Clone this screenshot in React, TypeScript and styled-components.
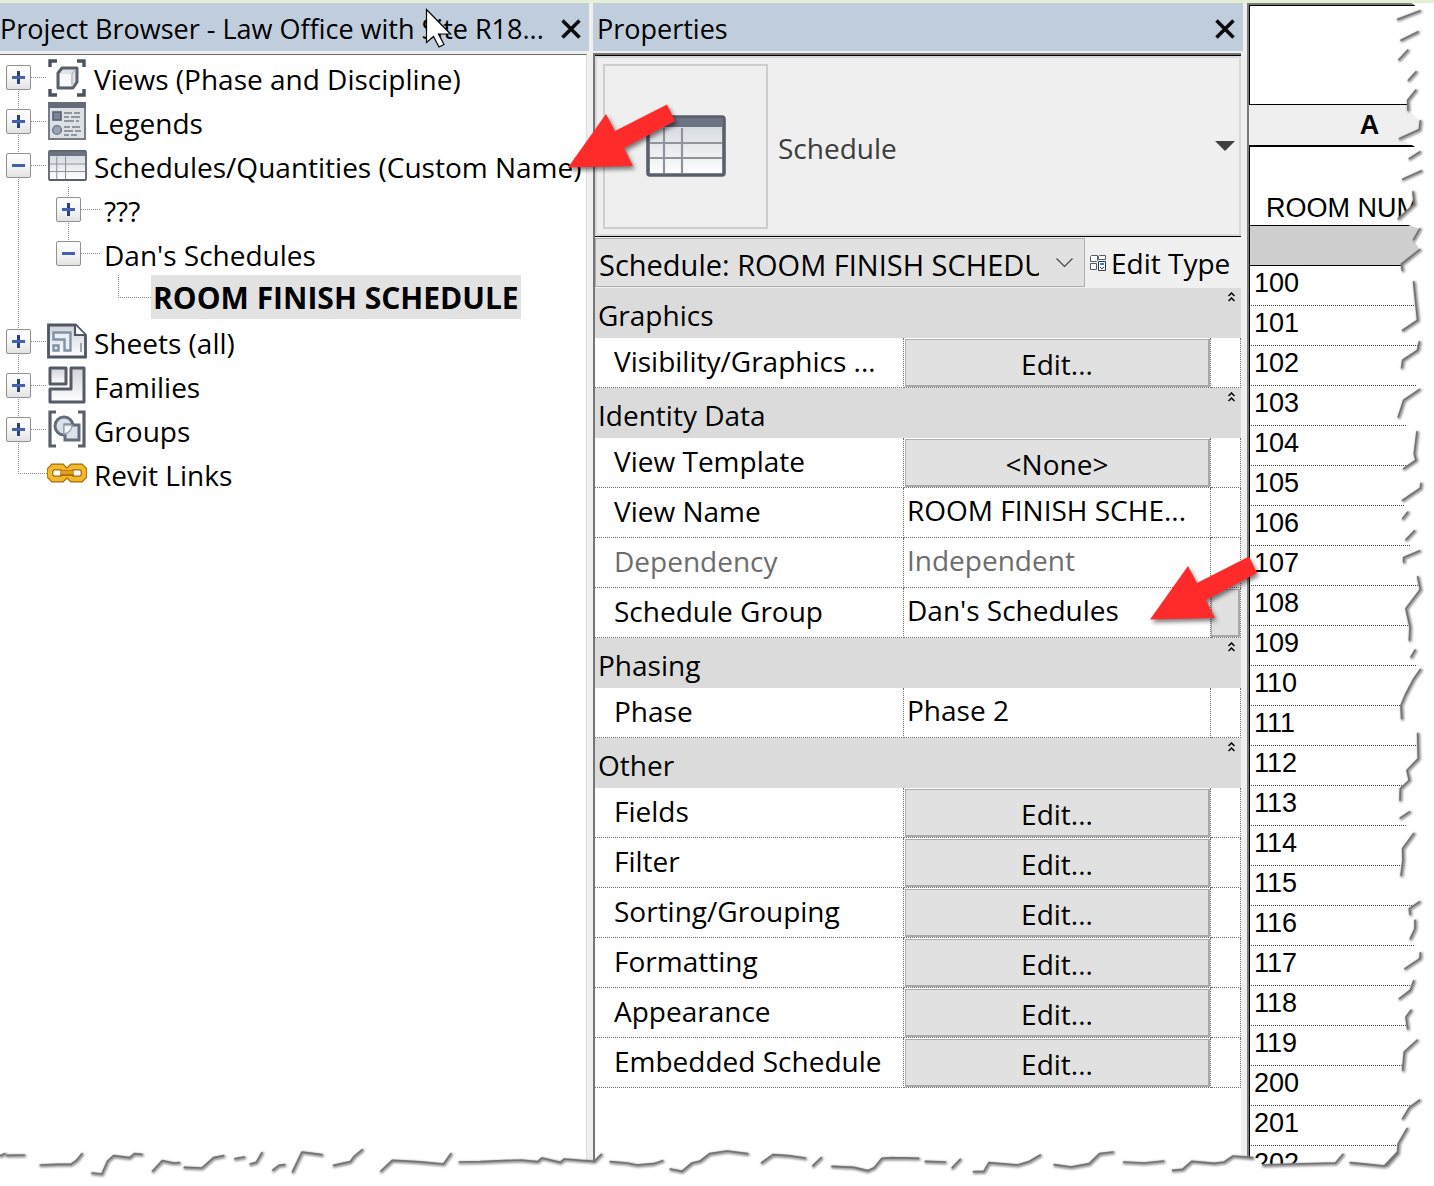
import React, { useState } from "react";
import styled, { createGlobalStyle, css } from "styled-components";

const GlobalStyle = createGlobalStyle`
  *, *::before, *::after { box-sizing: border-box; }
  body { margin: 0; background: #fff; }
  button, input, select { font: inherit; color: inherit; margin: 0; }
`;

const UI_FONT = `"Open Sans", "Noto Sans", sans-serif`;
const SHEET_FONT = `"Liberation Sans", Arial, sans-serif`;

/* ---------- window frame ---------- */

const Window = styled.main`
  position: relative;
  overflow: hidden;
  background: #f0f0f0;
  border-top: 3px solid #e4efd6;
  font-family: ${UI_FONT};
  font-size: 28px;
  line-height: 36px;
  color: #000;
`;

const Panes = styled.div`
  display: grid;
  grid-template-columns: minmax(0, 593fr) minmax(0, 654fr) minmax(0, 187fr);
`;

const Pane = styled.section`
  position: relative;
  display: flex;
  flex-direction: column;
  padding-right: 4px;
`;

const TitleBar = styled.header`
  display: flex;
  align-items: center;
  justify-content: space-between;
  height: 48px;
  padding: 3px 8px 0 0;
  background: #bfcddc;
`;

const Title = styled.h2<{ $indent?: boolean }>`
  margin: 0;
  padding-left: ${(p) => (p.$indent ? 4 : 0)}px;
  font-size: 27px;
  font-weight: 400;
  white-space: nowrap;
`;

const CloseButton = styled.button`
  display: flex;
  padding: 0;
  border: 0;
  background: none;
`;

/* ---------- project browser ---------- */

const BrowserBody = styled.div`
  flex: 1;
  margin: 3px 2px 0 0;
  border-top: 1px solid #696969;
  border-right: 1px solid #dcdcdc;
  background: #fff;
  overflow: hidden;
`;

const dots = (dir: string) =>
  `repeating-linear-gradient(to ${dir}, #8c8c8c 0 1px, transparent 1px 2px)`;

const Branch = styled.ul`
  margin: 0;
  padding: 0;
  list-style: none;
`;

const TreeItem = styled.li<{ $first?: boolean; $last?: boolean; $trunk: number }>`
  background-image: ${dots("bottom")};
  background-repeat: no-repeat;
  background-size: 1px ${(p) => (p.$last ? "22px" : "100%")};
  background-position: ${(p) => p.$trunk}px ${(p) => (p.$first ? 22 : 0)}px;
`;

const TreeRow = styled.div<{ $depth: number }>`
  display: flex;
  align-items: center;
  height: 44px;
  padding-left: ${(p) => [6, 56, 118][p.$depth]}px;
  white-space: nowrap;
`;

const Expander = styled.button`
  display: flex;
  flex: none;
  align-items: center;
  justify-content: center;
  width: 25px;
  height: 25px;
  padding: 0;
  border: 1px solid #919191;
  border-radius: 2px;
  background: linear-gradient(#fff, #f3f3f3 60%, #e2e2e2);
`;

const Connector = styled.span<{ $width: number; $lead?: number }>`
  flex: none;
  width: ${(p) => p.$width}px;
  height: 1px;
  margin-left: ${(p) => p.$lead || 0}px;
  background: ${dots("right")};
`;

const IconSlot = styled.span`
  display: flex;
  flex: none;
  align-items: center;
  justify-content: center;
  width: 40px;
  height: 44px;
`;

const NodeLabel = styled.span<{ $gap: number }>`
  padding: 3px 0 0 ${(p) => p.$gap}px;
`;

const SelectedLabel = styled.strong`
  height: 44px;
  padding: 0 2px;
  background: #e2e2e2;
  font-size: 30px;
  font-weight: 700;
  line-height: 46px;
`;

/* ---------- properties ---------- */

const PropertiesBody = styled.div`
  flex: 1;
  margin: 2px 2px 0 0;
  border: 2px solid #757575;
  border-width: 2px 0 0 2px;
  background: #fff;
`;

const TypePicker = styled.button`
  display: flex;
  align-items: center;
  gap: 10px;
  width: 100%;
  height: 182px;
  padding: 0 6px 0 8px;
  border: solid #000;
  border-width: 1px 0;
  background: #efefef;
  box-shadow: inset 0 0 0 2px #d8d8da;
  color: #3c3c3c;
  text-align: left;
`;

const Preview = styled.span`
  display: flex;
  align-items: center;
  justify-content: center;
  width: 165px;
  height: 165px;
  border: 2px solid #cdcdcf;
`;

const TypeName = styled.span`
  flex: 1;
  padding-top: 3px;
`;

const InstanceBar = styled.div`
  display: flex;
  align-items: center;
  height: 51px;
  background: #f0f0f0;
`;

const SelectBox = styled.div`
  display: grid;
  flex: 0 1 490px;
  min-width: 0;
  align-items: center;
`;

const InstanceSelect = styled.select`
  grid-area: 1 / 1;
  width: 100%;
  height: 49px;
  padding: 4px 45px 0 3px;
  border: 1px solid #adadad;
  border-radius: 0;
  background: #e1e1e1;
  font-size: 29px;
  appearance: none;
`;

const SelectArrow = styled.svg`
  grid-area: 1 / 1;
  justify-self: end;
  margin-right: 12px;
  pointer-events: none;
`;

const EditType = styled.button`
  display: flex;
  flex: 1;
  align-items: center;
  gap: 4px;
  height: 49px;
  padding: 0 0 0 5px;
  border: 0;
  background: none;
  white-space: nowrap;
`;

const PropertyTable = styled.table`
  width: 100%;
  table-layout: fixed;
  border-collapse: separate;
  border-spacing: 0;
`;

const GroupCell = styled.th`
  height: 50px;
  padding: 0;
  background: #dbdbdb;
  font-weight: 400;
  text-align: left;
`;

const GroupHead = styled.div`
  display: flex;
  justify-content: space-between;
  height: 50px;
  padding: 0 6px 0 3px;
  line-height: 54px;
`;

const CollapseButton = styled.button`
  display: flex;
  height: 18px;
  padding: 4px 0 0;
  border: 0;
  background: none;
`;

const dotted = "1px dotted #6e6e6e";

const NameCell = styled.th<{ $dim?: boolean }>`
  height: 50px;
  padding: 0 0 0 19px;
  border-right: ${dotted};
  border-bottom: ${dotted};
  color: ${(p) => (p.$dim ? "#6d6d6d" : "#000")};
  font-weight: 400;
  line-height: 46px;
  text-align: left;
  vertical-align: top;
  white-space: nowrap;
`;

const ValueCell = styled.td`
  height: 50px;
  padding: 0;
  border-right: ${dotted};
  border-bottom: ${dotted};
  vertical-align: top;
`;

const raised = css`
  border: 1px solid #adadad;
  border-right: 2px solid #a8a8a8;
  border-bottom: 2px solid #a8a8a8;
  border-radius: 0;
  background: #e1e1e1;
`;

const ValueButton = styled.button`
  ${raised}
  display: block;
  width: calc(100% - 1px);
  height: 48px;
  margin: 1px 0 0 1px;
  padding: 2px 0 0;
`;

const CellButton = styled.button`
  ${raised}
  display: block;
  width: 100%;
  height: 48px;
  margin-top: 1px;
`;

const ValueInput = styled.input`
  display: block;
  width: 100%;
  height: 44px;
  padding: 0 3px;
  border: 0;
  background: none;
  &:disabled { color: #6d6d6d; }
`;

/* ---------- schedule sheet ---------- */

const Sheet = styled.section`
  overflow: hidden;
  border: 2px solid #7a7a7a;
  border-width: 2px 0 0 2px;
  background: #fff;
  font-family: ${SHEET_FONT};
  font-size: 27px;
`;

const TitleBlock = styled.div`
  height: 100px;
  border: 1px solid #000;
  border-right: 0;
`;

const SheetTable = styled.table`
  width: 241px;
  table-layout: fixed;
  border-collapse: separate;
  border-spacing: 0;
`;

const ColumnLetter = styled.th`
  height: 42px;
  padding: 0;
  border-bottom: 2px solid #000;
  background: #efefef;
`;

const ColumnHeading = styled.th`
  height: 79px;
  padding: 0 0 0 16px;
  border-left: 1px solid #000;
  border-bottom: 1px solid #000;
  font-weight: 400;
  line-height: 34px;
  text-align: left;
  vertical-align: bottom;
`;

const FilterCell = styled.td`
  height: 40px;
  border-left: 1px solid #000;
  border-bottom: 1px solid #000;
  background: #cfcfcf;
`;

const RoomCell = styled.td`
  height: 40px;
  padding: 0 0 0 4px;
  border-left: 1px solid #000;
  border-bottom: 1px dotted #3c3c3c;
  line-height: 34px;
  vertical-align: top;
`;

/* ---------- annotations over the window ---------- */

const Overlay = styled.svg`
  position: absolute;
  overflow: visible;
  pointer-events: none;
`;

const FirstArrow = styled(Overlay)`
  left: -28px;
  top: 98px;
  z-index: 2;
`;

const SecondArrow = styled(Overlay)`
  right: -13px;
  top: 550px;
  z-index: 2;
`;

const Cursor = styled(Overlay)`
  left: 426px;
  top: 6px;
`;

const RightTear = styled(Overlay)`
  right: 0;
  top: -3px;
  z-index: 3;
`;

const BottomTear = styled(Overlay)`
  left: 0;
  bottom: 0;
  width: 100%;
  z-index: 3;
`;

/* ---------- drawings ---------- */

const CloseGlyph = () => (
  <svg width="20" height="20" viewBox="0 0 20 20" fill="none" stroke="#0a0a0a" strokeWidth="3.6">
    <path d="M1.5 1.5 L18.5 18.5 M18.5 1.5 L1.5 18.5" />
  </svg>
);

const Sign = ({ open }: { open: boolean }) => (
  <svg width="13" height="13" viewBox="0 0 13 13">
    {!open && <path d="M5 0h3v13h-3z" fill="#26407e" />}
    <path d="M0 5h13v3h-13z" fill="#4560b0" />
  </svg>
);

const Grad = ({ id }: { id: string }) => (
  <defs>
    <linearGradient id={id} x1="0" y1="0" x2="0" y2="1">
      <stop offset="0" stopColor="#cfd3da" />
      <stop offset="1" stopColor="#fff" />
    </linearGradient>
  </defs>
);

const ScheduleGlyph = ({ width, height, id }: { width: number; height: number; id: string }) => (
  <svg width={width} height={height} viewBox="0 0 80 62" preserveAspectRatio="none">
    <Grad id={id} />
    <rect x="2" y="2" width="76" height="58" rx="2" fill={`url(#${id})`} stroke="#59606b" strokeWidth="3.6" />
    <path d="M3 3h74v9h-74z" fill="#6c7482" />
    <path d="M18 13v45M36 13v45M4 28h72M4 43h72" stroke="#8f949d" strokeWidth="2.2" fill="none" />
  </svg>
);

const ViewsGlyph = () => (
  <svg width="40" height="40" viewBox="0 0 40 40" fill="none">
    <path d="M3 10V4h7M30 4h7v6M37 32v6h-7M10 38H3v-6" stroke="#4b525e" strokeWidth="3.4" />
    <path d="M11 16l4-5h15v14l-4 6H11z" fill="#dfe3e8" stroke="#59606b" strokeWidth="3" strokeLinejoin="round" />
    <path d="M13 17h11v12h-11z" fill="#f7f8f9" />
    <path d="M25 28V17l3-4" stroke="#bcc1c9" strokeWidth="1.6" />
  </svg>
);

const LegendsGlyph = () => (
  <svg width="38" height="38" viewBox="0 0 38 38">
    <rect x="1" y="1" width="36" height="36" fill="#dde0e5" stroke="#757d89" strokeWidth="2" />
    <path d="M0 0h38v6H0z" fill="#646c7a" />
    <rect x="5" y="10" width="8" height="8" fill="#76859a" stroke="#59606b" strokeWidth="1.6" />
    <circle cx="9" cy="28" r="4.4" fill="#98a4b4" stroke="#6d7581" strokeWidth="1.4" />
    <path
      d="M16 11h8M26 11h6M16 15h5M23 15h9M16 19h10M28 19h3M16 25h6M24 25h8M16 29h9M27 29h6M16 33h5M23 33h6"
      stroke="#777e89"
      strokeWidth="1.6"
    />
  </svg>
);

const SheetsGlyph = () => (
  <svg width="40" height="36" viewBox="0 0 40 36">
    <Grad id="sheets" />
    <path d="M1.5 2h27l10 10v22h-37z" fill="url(#sheets)" stroke="#4f5763" strokeWidth="2.8" />
    <path d="M28 2v10h10" fill="#fff" stroke="#4f5763" strokeWidth="2.2" />
    <path d="M6.5 9.5h17v18h-6v-11h-11z" fill="#e9eef3" stroke="#7f92a8" strokeWidth="2.4" />
    <path d="M6.5 22.5h5v5h-5z" fill="#e9eef3" stroke="#7f92a8" strokeWidth="2.4" />
    <path d="M34 20v9" stroke="#8d939c" strokeWidth="1.6" />
  </svg>
);

const FamiliesGlyph = () => (
  <svg width="38" height="38" viewBox="0 0 38 38">
    <Grad id="families" />
    <g fill="url(#families)" stroke="#545b67" strokeWidth="3" strokeLinejoin="round">
      <path d="M2 2h16v16H2z" />
      <path d="M23 2h13v34H2V23h21z" />
    </g>
  </svg>
);

const GroupsGlyph = () => (
  <svg width="38" height="38" viewBox="0 0 38 38" fill="none">
    <path d="M8 2H2v34h6M30 2h6v34h-6" stroke="#59606b" strokeWidth="3.2" />
    <circle cx="16" cy="16" r="9" fill="#dce1e8" stroke="#646d7b" strokeWidth="3" />
    <path d="M17 15h14v15h-14z" fill="#dce3ec" stroke="#646d7b" strokeWidth="3" />
    <path d="M16 15h8a9 9 0 0 1-8 9z" fill="#f4f6f8" stroke="#9ba7b7" strokeWidth="1.4" />
  </svg>
);

const LinksGlyph = () => (
  <svg width="40" height="20" viewBox="0 0 40 20" fill="none">
    <g stroke="#a06d0c" strokeWidth="6.8">
      <path d="M6 4h9l3 3v6l-3 3H6l-3-3V7z" />
      <path d="M25 4h9l3 3v6l-3 3h-9l-3-3V7z" />
    </g>
    <g stroke="#f3b92a" strokeWidth="4.4">
      <path d="M6 4h9l3 3v6l-3 3H6l-3-3V7z" />
      <path d="M25 4h9l3 3v6l-3 3h-9l-3-3V7z" />
    </g>
    <path d="M13 10h14" stroke="#a06d0c" strokeWidth="6" />
    <path d="M13 9.5h14" stroke="#e89c1c" strokeWidth="3.6" />
  </svg>
);

const EditTypeGlyph = () => (
  <svg width="17" height="17" viewBox="0 0 17 17" fill="#fff" stroke="#555b66" strokeWidth="1">
    <path d="M.5 2.5l1-1h6v5l-1 1h-6zM8.5 2.5l1-1h6v4h-7zM.5 9.5h6v6h-6z" />
    <path d="M8.5 7.5h7v9h-7z" stroke="#2c3950" />
    <path d="M10 9h4v2h-4z" fill="#3f7ac4" stroke="none" />
    <path d="M10 13.500h1M13 13.500h1M11 14.500h2" stroke="#2c3950" />
  </svg>
);

const CollapseGlyph = () => (
  <svg width="7" height="10" viewBox="0 0 7 10" fill="none" stroke="#000" strokeWidth="1.5">
    <path d="M0.5 4l3-3 3 3M0.5 9l3-3 3 3" />
  </svg>
);

const ArrowShape = () => (
  <path
    d="M3 66.500L41 13l9 17L102 3.500 110 20 59 47l9 18z"
    fill="#ff2a2a"
    style={{ filter: "drop-shadow(2px 3px 2px rgba(0,0,0,.5))" }}
  />
);

/* ---------- torn paper edge ---------- */

type Pt = [number, number];

const rightEdge: Pt[] = [
  [100, 0], [130, 12], [148, 32], [82, 57], [110, 80], [142, 95], [92, 120], [112, 150], [86, 178], [105, 205],
  [137, 215], [114, 240], [136, 270], [112, 300], [113, 330], [150, 362], [147, 388], [88, 415], [135, 440],
  [148, 455], [117, 475], [130, 500], [152, 512], [97, 537], [110, 560], [128, 575], [132, 612], [84, 655],
  [105, 672], [148, 686], [130, 718], [148, 748], [93, 792], [96, 810], [130, 845], [137, 915], [142, 960],
  [97, 990], [128, 1012], [147, 1025], [142, 1050], [97, 1080], [94, 1102], [132, 1145], [147, 1168], [100, 1200],
  [84, 1250], [112, 1280], [140, 1295], [132, 1360], [137, 1380], [100, 1405], [125, 1435], [152, 1450],
  [150, 1464], [97, 1500], [102, 1515], [112, 1536], [97, 1555], [112, 1580], [132, 1592], [107, 1618],
  [125, 1640], [147, 1652], [100, 1672], [100, 1685], [142, 1730], [150, 1768], [107, 1825], [119, 1880],
  [117, 1920], [134, 1950], [122, 1970], [150, 2008], [130, 2036], [106, 2082], [92, 2115], [94, 2155],
  [130, 2182], [142, 2200], [144, 2275], [110, 2310], [117, 2340], [90, 2365], [89, 2400], [105, 2425],
  [117, 2435], [90, 2453], [110, 2480], [130, 2500], [97, 2545], [98, 2580], [92, 2625], [112, 2670], [147, 2705],
  [117, 2725], [119, 2742], [134, 2760], [134, 2785], [120, 2815], [150, 2858], [149, 2875], [104, 2905],
  [112, 2928], [130, 2942], [120, 2970], [87, 2995], [106, 3015], [122, 3030], [107, 3050], [112, 3085],
  [140, 3120], [102, 3155], [97, 3210], [117, 3245], [147, 3300], [117, 3322], [97, 3355], [110, 3385],
  [84, 3430], [82, 3458], [47, 3497],
];

const bottomEdge: Pt[] = [
  [0, 106], [14, 100], [20, 105], [72, 104], [100, 112], [120, 134], [170, 132], [212, 132], [230, 119],
  [245, 100], [275, 158], [305, 161], [322, 122], [340, 106], [388, 112], [402, 100], [425, 102], [457, 152],
  [486, 121], [520, 128], [537, 127], [552, 141], [605, 143], [640, 112], [670, 106], [704, 115], [732, 110],
  [750, 131], [768, 126], [785, 97], [818, 149], [836, 135], [853, 133], [877, 154], [905, 95], [935, 99],
  [965, 103], [1000, 135], [1050, 124], [1062, 108], [1086, 88], [1142, 152], [1176, 120], [1250, 124],
  [1330, 131], [1352, 100], [1377, 125], [1440, 124], [1560, 119], [1612, 124], [1625, 113], [1680, 126],
  [1692, 116], [1740, 120], [1782, 123], [1803, 102], [1830, 124], [1880, 128], [1910, 134], [1960, 130],
  [1987, 121], [2010, 146], [2045, 153], [2075, 128], [2100, 122], [2128, 100], [2180, 92], [2242, 100],
  [2284, 127], [2318, 103], [2365, 106], [2415, 113], [2438, 136], [2463, 112], [2495, 138], [2560, 141],
  [2602, 151], [2622, 142], [2645, 114], [2680, 112], [2755, 114], [2775, 123], [2835, 125], [2856, 142],
  [2880, 117], [2920, 154], [2951, 153], [2966, 127], [3052, 134], [3088, 123], [3120, 104], [3162, 133],
  [3212, 140], [3267, 130], [3298, 100], [3338, 95], [3370, 125], [3432, 128], [3490, 122], [3517, 150],
  [3547, 147], [3574, 123], [3642, 129], [3672, 125], [3698, 107], [3757, 112], [3788, 134], [3882, 131],
  [4006, 128], [4028, 102], [4050, 127], [4102, 132], [4152, 137], [4192, 95],
];

const toPath = (pts: Pt[]) => "M" + pts.map((p) => p.join(" ")).join("L");

const shadowPath = (pts: Pt[], shaded: (dx: number, dy: number) => boolean) =>
  pts
    .slice(1)
    .map((p, i) => {
      const q = pts[i];
      return shaded(p[0] - q[0], p[1] - q[1]) ? `M${q[0]} ${q[1]}L${p[0]} ${p[1]}` : "";
    })
    .join("");

const TearShadow = ({ d, dx, dy }: { d: string; dx: number; dy: number }) => (
  <g fill="none" strokeLinecap="round">
    <path
      d={d}
      transform={`translate(${dx} ${dy})`}
      stroke="#8c8c8c"
      strokeWidth="9"
      style={{ filter: "blur(3px)" }}
    />
    <path d={d} transform={`translate(${dx / 4} ${dy / 4})`} stroke="#727272" strokeWidth="5" />
  </g>
);

const TornEdges = () => (
  <>
    <BottomTear height="66" viewBox="0 0 4302 198" preserveAspectRatio="none" aria-hidden="true">
      <path d={`${toPath(bottomEdge)}L4302 60L4302 201L0 201Z`} fill="#fff" />
      <TearShadow d={shadowPath(bottomEdge, (dx, dy) => dy <= dx * 0.25)} dx={3} dy={4} />
    </BottomTear>
    <RightTear width="64" height="1186" viewBox="0 0 192 3558" aria-hidden="true">
      <path d={`${toPath(rightEdge)}L47 3558L196 3558L196 0Z`} fill="#fff" />
      <TearShadow d={shadowPath(rightEdge, (dx, dy) => dx <= dy * 0.3)} dx={4} dy={3} />
    </RightTear>
  </>
);

/* ---------- data ---------- */

type Node = { label: string; icon?: React.ReactNode; leaf?: boolean; selected?: boolean; children?: Node[] };

const tree: Node[] = [
  { label: "Views (Phase and Discipline)", icon: <ViewsGlyph /> },
  { label: "Legends", icon: <LegendsGlyph /> },
  {
    label: "Schedules/Quantities (Custom Name)",
    icon: <ScheduleGlyph width={39} height={31} id="sched-small" />,
    children: [
      { label: "???" },
      { label: "Dan's Schedules", children: [{ label: "ROOM FINISH SCHEDULE", leaf: true, selected: true }] },
    ],
  },
  { label: "Sheets (all)", icon: <SheetsGlyph /> },
  { label: "Families", icon: <FamiliesGlyph /> },
  { label: "Groups", icon: <GroupsGlyph /> },
  { label: "Revit Links", icon: <LinksGlyph />, leaf: true },
];

type Prop = { name: string; kind: "button" | "text" | "disabled"; value: string; browse?: boolean };

const groups: { title: string; rows: Prop[] }[] = [
  { title: "Graphics", rows: [{ name: "Visibility/Graphics ...", kind: "button", value: "Edit..." }] },
  {
    title: "Identity Data",
    rows: [
      { name: "View Template", kind: "button", value: "<None>" },
      { name: "View Name", kind: "text", value: "ROOM FINISH SCHE..." },
      { name: "Dependency", kind: "disabled", value: "Independent" },
      { name: "Schedule Group", kind: "text", value: "Dan's Schedules", browse: true },
    ],
  },
  { title: "Phasing", rows: [{ name: "Phase", kind: "text", value: "Phase 2" }] },
  {
    title: "Other",
    rows: ["Fields", "Filter", "Sorting/Grouping", "Formatting", "Appearance", "Embedded Schedule"].map(
      (name): Prop => ({ name, kind: "button", value: "Edit..." })
    ),
  },
];

const rooms = [...Array.from({ length: 20 }, (_, i) => 100 + i), 200, 201, 202];

/* ---------- parts ---------- */

const TRUNKS = [18, 68, 118];

const TreeNode = ({ node, depth, first, last }: { node: Node; depth: number; first: boolean; last: boolean }) => {
  const [open, setOpen] = useState(!!node.children);
  return (
    <TreeItem $trunk={TRUNKS[depth]} $first={first && depth === 0} $last={last}>
      <TreeRow $depth={depth}>
        {node.leaf ? (
          <Connector $width={depth === 2 ? 33 : 29} $lead={depth === 2 ? 0 : 12} />
        ) : (
          <>
            <Expander aria-label={`Toggle ${node.label}`} aria-expanded={open} onClick={() => setOpen(!open)}>
              <Sign open={open} />
            </Expander>
            <Connector $width={depth ? 20 : 16} />
          </>
        )}
        {node.icon && <IconSlot>{node.icon}</IconSlot>}
        {node.selected ? (
          <SelectedLabel>{node.label}</SelectedLabel>
        ) : (
          <NodeLabel $gap={node.icon ? 7 : 3}>{node.label}</NodeLabel>
        )}
      </TreeRow>
      {open && node.children && (
        <Branch>
          {node.children.map((c, i) => (
            <TreeNode key={c.label} node={c} depth={depth + 1} first={i === 0} last={i === node.children!.length - 1} />
          ))}
        </Branch>
      )}
    </TreeItem>
  );
};

const PropertyRow = ({ prop }: { prop: Prop }) => {
  const [value, setValue] = useState(prop.value);
  const id = "prop-" + prop.name.replace(/\W+/g, "-").toLowerCase();
  return (
    <tr>
      <NameCell scope="row" $dim={prop.kind === "disabled"}>
        <label htmlFor={id}>{prop.name}</label>
      </NameCell>
      <ValueCell>
        {prop.kind === "button" ? (
          <ValueButton id={id}>{prop.value}</ValueButton>
        ) : (
          <ValueInput
            id={id}
            value={value}
            disabled={prop.kind === "disabled"}
            onChange={(e) => setValue(e.target.value)}
          />
        )}
      </ValueCell>
      <ValueCell>{prop.browse && <CellButton aria-label="Browse schedule groups" />}</ValueCell>
    </tr>
  );
};

const PropertyGroup = ({ title, rows }: { title: string; rows: Prop[] }) => {
  const [open, setOpen] = useState(true);
  return (
    <tbody>
      <tr>
        <GroupCell colSpan={3} scope="rowgroup">
          <GroupHead>
            {title}
            <CollapseButton aria-label={`Collapse ${title}`} onClick={() => setOpen(!open)}>
              <CollapseGlyph />
            </CollapseButton>
          </GroupHead>
        </GroupCell>
      </tr>
      {open && rows.map((r) => <PropertyRow key={r.name} prop={r} />)}
    </tbody>
  );
};

export default function App() {
  return (
    <>
      <GlobalStyle />
      <Window>
        <Panes>
          <Pane>
            <TitleBar>
              <Title>Project Browser - Law Office with Site R18...</Title>
              <CloseButton aria-label="Close project browser">
                <CloseGlyph />
              </CloseButton>
            </TitleBar>
            <BrowserBody>
              <Branch>
                {tree.map((n, i) => (
                  <TreeNode key={n.label} node={n} depth={0} first={i === 0} last={i === tree.length - 1} />
                ))}
              </Branch>
            </BrowserBody>
            <Cursor width="27" height="40" viewBox="0 0 27 40" aria-hidden="true">
              <path
                d="M.5.5v33l7-6 5.500 10.500 5-2.500-5.500-10.500h12z"
                fill="#fff"
                stroke="#000"
                strokeWidth="1.2"
              />
            </Cursor>
          </Pane>

          <Pane>
            <TitleBar>
              <Title $indent>Properties</Title>
              <CloseButton aria-label="Close properties">
                <CloseGlyph />
              </CloseButton>
            </TitleBar>
            <PropertiesBody>
              <TypePicker>
                <Preview>
                  <ScheduleGlyph width={80} height={62} id="sched-large" />
                </Preview>
                <TypeName>Schedule</TypeName>
                <svg width="20" height="10" viewBox="0 0 20 10">
                  <path d="M0 0h20l-10 10z" fill="#3f3f3f" />
                </svg>
              </TypePicker>
              <InstanceBar>
                <SelectBox>
                  <InstanceSelect aria-label="Instance">
                    <option>Schedule: ROOM FINISH SCHEDULE</option>
                  </InstanceSelect>
                  <SelectArrow width="17" height="10" viewBox="0 0 17 10" fill="none" stroke="#444" strokeWidth="1.2">
                    <path d="M.5.5l8 8 8-8" />
                  </SelectArrow>
                </SelectBox>
                <EditType>
                  <EditTypeGlyph />
                  Edit Type
                </EditType>
              </InstanceBar>
              <PropertyTable>
                <colgroup>
                  <col style={{ width: 309 }} />
                  <col />
                  <col style={{ width: 30 }} />
                </colgroup>
                {groups.map((g) => (
                  <PropertyGroup key={g.title} {...g} />
                ))}
              </PropertyTable>
            </PropertiesBody>
            <FirstArrow width="113" height="70" viewBox="0 0 113 70" aria-hidden="true">
              <ArrowShape />
            </FirstArrow>
            <SecondArrow width="113" height="70" viewBox="0 0 113 70" aria-hidden="true">
              <ArrowShape />
            </SecondArrow>
          </Pane>

          <Sheet>
            <TitleBlock />
            <SheetTable>
              <thead>
                <tr>
                  <ColumnLetter scope="col">A</ColumnLetter>
                </tr>
                <tr>
                  <ColumnHeading scope="col">ROOM NUM</ColumnHeading>
                </tr>
              </thead>
              <tbody>
                <tr>
                  <FilterCell />
                </tr>
                {rooms.map((r) => (
                  <tr key={r}>
                    <RoomCell>{r}</RoomCell>
                  </tr>
                ))}
              </tbody>
            </SheetTable>
          </Sheet>
        </Panes>
        <TornEdges />
      </Window>
    </>
  );
}
